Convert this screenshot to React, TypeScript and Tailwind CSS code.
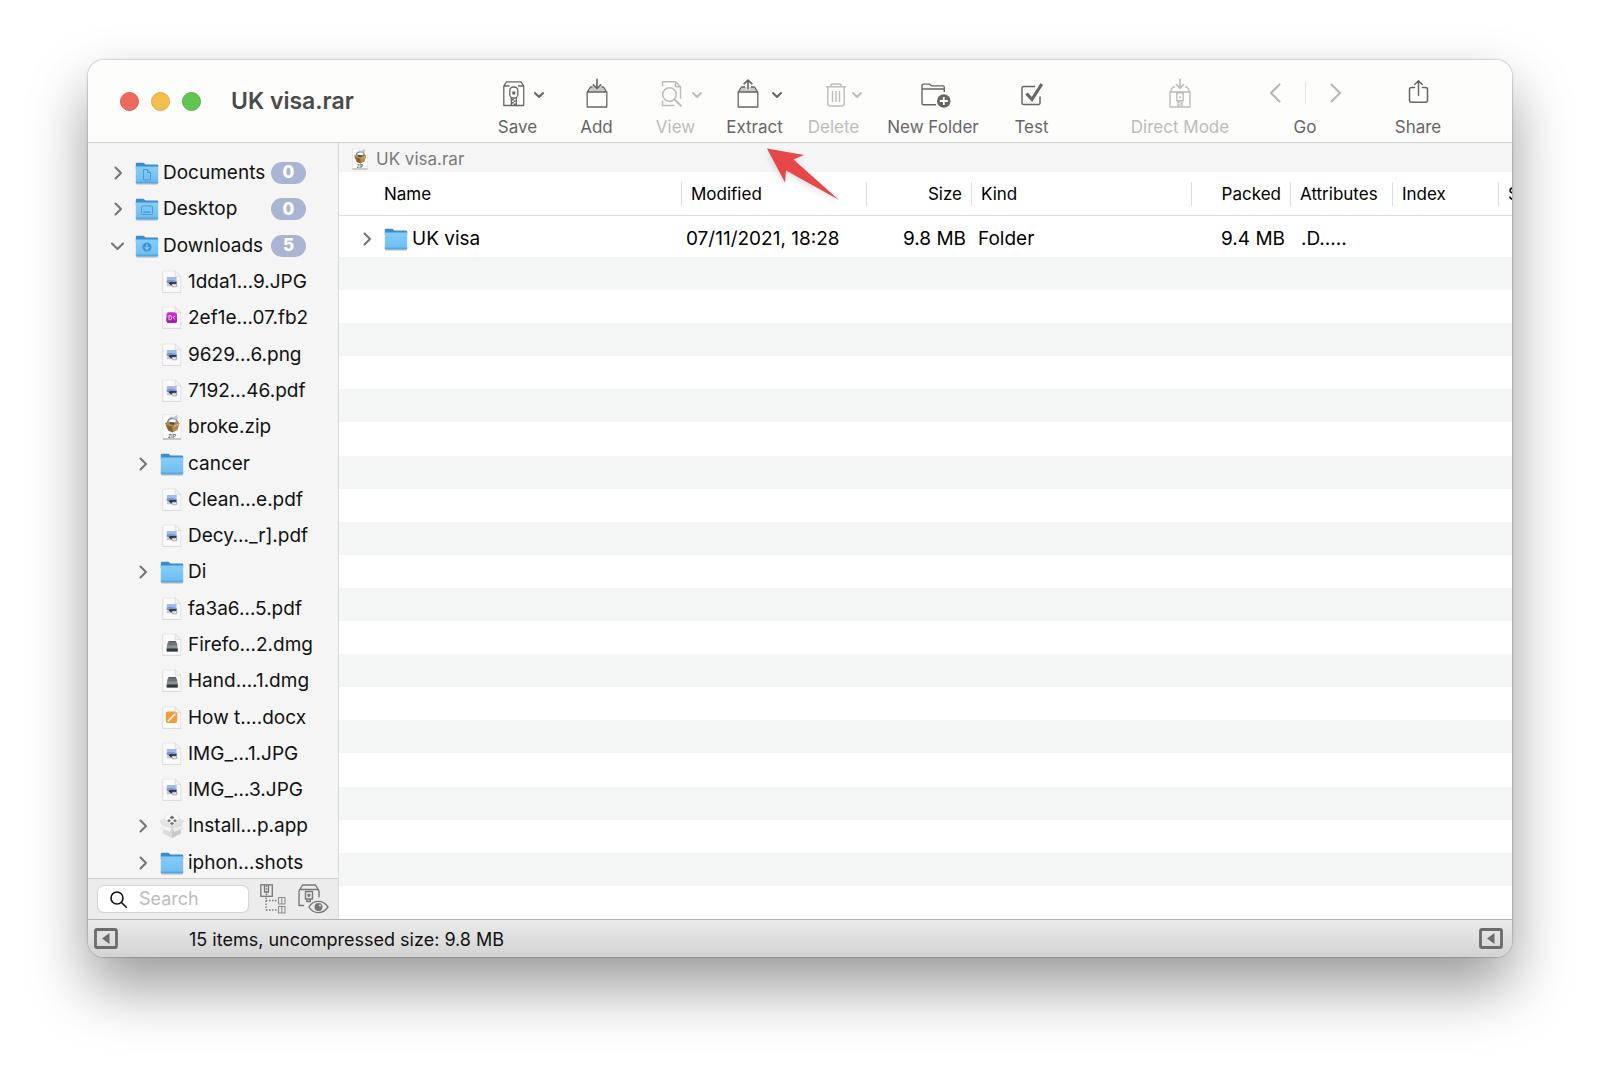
import { useState } from 'react';
import type { ReactNode } from 'react';

type FileKind = 'folder' | 'documents' | 'desktop' | 'downloads' | 'image' | 'fb2' | 'zip' | 'dmg' | 'docx' | 'app';

interface TreeItem {
  name: string;
  kind: FileKind;
  level: 0 | 1;
  open?: boolean;
  count?: number;
}

const tree: TreeItem[] = [
  { name: 'Documents', kind: 'documents', level: 0, open: false, count: 0 },
  { name: 'Desktop', kind: 'desktop', level: 0, open: false, count: 0 },
  { name: 'Downloads', kind: 'downloads', level: 0, open: true, count: 5 },
  { name: '1dda1…9.JPG', kind: 'image', level: 1 },
  { name: '2ef1e…07.fb2', kind: 'fb2', level: 1 },
  { name: '9629…6.png', kind: 'image', level: 1 },
  { name: '7192…46.pdf', kind: 'image', level: 1 },
  { name: 'broke.zip', kind: 'zip', level: 1 },
  { name: 'cancer', kind: 'folder', level: 1, open: false },
  { name: 'Clean…e.pdf', kind: 'image', level: 1 },
  { name: 'Decy…_r].pdf', kind: 'image', level: 1 },
  { name: 'Di', kind: 'folder', level: 1, open: false },
  { name: 'fa3a6…5.pdf', kind: 'image', level: 1 },
  { name: 'Firefo…2.dmg', kind: 'dmg', level: 1 },
  { name: 'Hand….1.dmg', kind: 'dmg', level: 1 },
  { name: 'How t….docx', kind: 'docx', level: 1 },
  { name: 'IMG_…1.JPG', kind: 'image', level: 1 },
  { name: 'IMG_…3.JPG', kind: 'image', level: 1 },
  { name: 'Install…p.app', kind: 'app', level: 1, open: false },
  { name: 'iphon…shots', kind: 'folder', level: 1, open: false },
];

const columns = [
  { title: 'Name', right: false },
  { title: 'Modified', right: false },
  { title: 'Size', right: true },
  { title: 'Kind', right: false },
  { title: 'Packed', right: true },
  { title: 'Attributes', right: false },
  { title: 'Index', right: false },
  { title: 'S', right: false },
];

/* ---------- File icons ---------- */

function FolderIcon({ mark }: { mark?: ReactNode }) {
  return (
    <svg width="24" height="24" viewBox="0 0 24 24" fill="none" className="shrink-0">
      <defs>
        <linearGradient id="folderFront" x1="0" y1="0" x2="0" y2="1">
          <stop offset="0" stopColor="#86cdf8" />
          <stop offset="1" stopColor="#6cbcf0" />
        </linearGradient>
      </defs>
      <path d="M.8 3a1.200 1.200 0 0 1 1.200-1.200h6.500l2 1.600H22a1.200 1.200 0 0 1 1.200 1.200V8H.8z" fill="#3c8dcb" />
      <path d="M.8 5.600h22.400V21.600a1 1 0 0 1-1 1H1.800a1 1 0 0 1-1-1z" fill="url(#folderFront)" />
      <path d="M.8 20.600h22.400v1a1 1 0 0 1-1 1H1.800a1 1 0 0 1-1-1z" fill="#58a8de" />
      <path d="M1.500 23h21" stroke="#9aa7b0" strokeWidth=".8" />
      {mark}
    </svg>
  );
}

function Page({ children }: { children?: ReactNode }) {
  return (
    <svg width="24" height="24" viewBox="0 0 24 24" fill="none" className="shrink-0">
      <path d="M2.500 2h18.400v21H2.500z" fill="#d0d0d0" />
      <path d="M2.800 1h12.400l5.600 5.600V22.300h-18z" fill="#fafafa" stroke="#dedede" strokeWidth=".6" />
      <path d="M15.200.700h6v6z" fill="#f5f5f5" />
      {children}
      <path d="M15.200 1l5.600 5.600h-5.600z" fill="#f3f3f3" stroke="#cacaca" strokeWidth=".5" />
    </svg>
  );
}

function ZipIcon({ small = false }: { small?: boolean }) {
  return (
    <svg width={small ? 20 : 24} height={small ? 22 : 26} viewBox="0 0 24 26" fill="none" className="shrink-0">
      <path d="M3 .8h14l4 4v20H3z" fill="#fff" stroke="#d6d6d6" strokeWidth=".6" />
      <path d="M3 25h18" stroke="#8a8a8a" strokeWidth=".8" />
      <path d="M7.500 9c.5-6 9.500-6 10 0" stroke="#6f93b5" strokeWidth="1.600" />
      <path d="M8 4.500l3-2 3 .5 3-2 1 3.500-3 1-3-1.500z" fill="#b9c4cc" />
      <path d="M4.800 9l4-1.500 4 2 4.500-3 2.200 3-2 6.500-5 2.500-4.500-2z" fill="#b08a52" />
      <path d="M6 11l6 1.500 1 6-4.500-2z" fill="#85612f" />
      <path d="M9.500 8l5.500.5-1.500 2.500-3.500-1z" fill="#4e4a45" />
      <path d="M14 12.500l4.500-2.500" stroke="#d9bd8a" strokeWidth="1.200" />
      <text x="12" y="23.800" textAnchor="middle" fontSize="5" fontWeight="600" fill="#555" fontFamily="Inter, sans-serif">
        ZIP
      </text>
    </svg>
  );
}

function FileIcon({ kind }: { kind: FileKind }) {
  switch (kind) {
    case 'documents':
      return <FolderIcon mark={<path d="M8.500 8.500h4l3 3v7.500h-7zM12.500 8.500v3h3" stroke="#4b9bd6" strokeWidth="1" />} />;
    case 'desktop':
      return (
        <FolderIcon
          mark={
            <>
              <rect x="6.500" y="9" width="11" height="8.500" rx="1" stroke="#4b9bd6" />
              <path d="M8.500 15.200h7" stroke="#4b9bd6" strokeWidth="1.500" />
            </>
          }
        />
      );
    case 'downloads':
      return (
        <FolderIcon
          mark={
            <>
              <circle cx="12" cy="13" r="4.600" fill="#3f93d2" />
              <path d="M12 10.200v5M9.800 13.200l2.200 2.200 2.200-2.200" stroke="#86cdf8" strokeWidth="1.200" />
            </>
          }
        />
      );
    case 'folder':
      return <FolderIcon />;
    case 'image':
      return (
        <Page>
          <rect x="6.800" y="7" width="9.800" height="6" fill="#a0bcf2" />
          <path d="M6.800 10.500l4-.8 5.800 1.300v2.200H6.800z" fill="#7f97c4" />
          <path d="M8.500 12.800l2-.8h6v3.500H9.500z" fill="#2f3647" />
          <path d="M6.800 14h3l1 2.300h-4z" fill="#c3c7cf" />
          <rect x="12" y="14" width="4.800" height="2.800" rx=".6" fill="#e4e6ea" stroke="#7d828c" strokeWidth=".6" />
        </Page>
      );
    case 'fb2':
      return (
        <Page>
          <rect x="6.500" y="6.200" width="10.500" height="10.800" rx="2.200" fill="#c92fd0" />
          <path d="M6.500 12H17v2.800a2.200 2.200 0 0 1-2.200 2.200H8.700a2.200 2.200 0 0 1-2.200-2.200z" fill="#a91eb0" />
          <path d="M9 9.500h.8a2 2.200 0 0 1 0 4.400H9zM15.200 9.800l-2.200 1.900 2.200 1.900" stroke="#f6d4f7" strokeWidth=".9" />
        </Page>
      );
    case 'dmg':
      return (
        <Page>
          <path d="M8 8.800h8.500l1.200 5.700V18a.5.500 0 0 1-.5.500H7.200a.5.500 0 0 1-.5-.5v-3.500z" fill="#8a9394" />
          <path d="M7.800 10h9l.5 2.500H7.200z" fill="#6c7577" />
          <path d="M6.700 15.500h11V18a.5.500 0 0 1-.5.500H7.200a.5.500 0 0 1-.5-.5z" fill="#303537" />
          <path d="M8.500 8.800h7.500" stroke="#222" strokeWidth="1" />
        </Page>
      );
    case 'docx':
      return (
        <Page>
          <rect x="5.800" y="5.500" width="11.500" height="11.500" rx="2.200" fill="#f49b3a" />
          <path d="M8.300 14.800l6.500-6.500" stroke="#fff" strokeWidth="1.600" strokeLinecap="round" />
        </Page>
      );
    case 'zip':
      return <ZipIcon />;
    case 'app':
      return (
        <svg width="24" height="24" viewBox="0 0 24 24" fill="none" className="shrink-0">
          <path d="M5 3a3 3 0 0 1 3-3h8a3 3 0 0 1 3 3v10H5z" fill="#fafafa" stroke="#dedede" strokeWidth=".6" />
          <path d="M12 1.500L9.500 3.500 12 5.500l2.500-2zM9 5L7 6.800 9 8.600l2-1.800zM15 5l-2 1.800 2 1.800 2-1.800zM12 7.800L9.800 9.600 12 11.400l2.200-1.800z" fill="#777" />
          <path d="M3 11l9 3.500 9-3.500v8.500L12 24l-9-4.500z" fill="#dcdcdc" />
          <path d="M12 14.500l9-3.500v8.500L12 24z" fill="#c9c9c9" />
          <path d="M3 11L.3 7l4.200-1.500L12 13v1.500z" fill="#e6e6e6" stroke="#c6c6c6" strokeWidth=".4" />
          <path d="M21 11l2.700-4-4.200-1.500L12 13v1.500z" fill="#e2e2e2" stroke="#c2c2c2" strokeWidth=".4" />
          <path d="M3 11l9 3.500L9.500 18 .5 14.500z" fill="#f2f2f2" stroke="#d4d4d4" strokeWidth=".4" />
          <path d="M21 11l-9 3.500 2.500 3.500 9-3.500z" fill="#ececec" stroke="#cdcdcd" strokeWidth=".4" />
        </svg>
      );
  }
}

/* ---------- Toolbar icons ---------- */

function Chevron({ open = false }: { open?: boolean }) {
  return (
    <svg width="14" height="14" viewBox="0 0 14 14" fill="none" stroke="#747474" strokeWidth="2" strokeLinecap="round" strokeLinejoin="round">
      {open ? <path d="M1 4.500l5.500 5.500L12 4.500" /> : <path d="M4.500 1.500L10 7l-5.500 5.500" />}
    </svg>
  );
}

function MenuArrow() {
  return (
    <svg width="12" height="30" viewBox="0 0 12 30" fill="none" stroke="currentColor" strokeWidth="2" strokeLinecap="round" strokeLinejoin="round">
      <path d="M2 15l4 4 4-4" />
    </svg>
  );
}

function ToolGlyph({ children, wide = false }: { children: ReactNode; wide?: boolean }) {
  return (
    <svg
      width={wide ? 30 : 22}
      height="30"
      viewBox={wide ? '0 0 30 30' : '0 0 22 30'}
      fill="none"
      stroke="currentColor"
      strokeWidth="1.300"
      strokeLinejoin="round"
    >
      {children}
    </svg>
  );
}

const saveGlyph = (
  <ToolGlyph>
    <path d="M.8 8L3.500 3.800h14.500L20.700 8v19.500H.8zM.8 8h5.700M15 8h5.700" />
    <rect x="6.800" y="9" width="8" height="11" rx="3.500" />
    <rect x="9.300" y="13.500" width="3" height="3" fill="currentColor" stroke="none" />
    <path d="M8.300 20v7.500M13.300 20v7.500" />
    <path d="M8.800 20.800h2v1.600h-2zM10.800 22.400h2V24h-2zM8.800 24h2v1.600h-2zM10.800 25.600h2v1.600h-2z" fill="currentColor" stroke="none" />
  </ToolGlyph>
);

const addGlyph = (
  <ToolGlyph>
    <path d="M1.200 14L4.500 9 8 8.500l3 3 3-3 3.500.5 3.300 5z" fill="currentColor" fillOpacity=".35" stroke="none" />
    <path d="M1.200 14h19.600v15H1.200zM1.200 14L4.500 9h2M20.800 14l-3.300-5h-2" />
    <path d="M11 .8V10M6.800 6.400L11 10.500l4.200-4.100" strokeWidth="1.600" />
  </ToolGlyph>
);

const extractGlyph = (
  <ToolGlyph>
    <path d="M1.200 14L4.500 9h5v3h3V9h5l3.300 5z" fill="currentColor" fillOpacity=".35" stroke="none" />
    <path d="M1.200 14h19.600v15H1.200zM1.200 14L4.500 9H8M20.800 14l-3.300-5H14" />
    <path d="M11 11.500V2.500M6.600 6.400L11 2.100l4.400 4.300" strokeWidth="1.600" />
  </ToolGlyph>
);

const viewGlyph = (
  <ToolGlyph>
    <path d="M1.500 8.500V3.800h13l5 5v12M1.500 22.500v5h12M14.500 3.800v5h5" strokeWidth="1.500" />
    <circle cx="8.500" cy="16.500" r="6.800" strokeWidth="1.600" />
    <path d="M13.500 21.500l7 6.800" strokeWidth="2" />
  </ToolGlyph>
);

const deleteGlyph = (
  <ToolGlyph>
    <path d="M1 8.700h20M6 8.500V7a1 1 0 0 1 1-1h8a1 1 0 0 1 1 1v1.500" strokeWidth="1.400" />
    <path d="M2.800 9v16.500a2.500 2.500 0 0 0 2.500 2.500h11.400a2.500 2.500 0 0 0 2.500-2.500V9M7.500 13v11M11 13v11M14.500 13v11" strokeWidth="1.400" />
  </ToolGlyph>
);

const newFolderGlyph = (
  <ToolGlyph wide>
    <path d="M15 26.800H2.500A1.500 1.500 0 0 1 1 25.300V7.300a1.200 1.200 0 0 1 1.200-1.200h6.300l2 1.800h11.300a1.500 1.500 0 0 1 1.500 1.400v4.700M1 11h22.300" strokeWidth="1.400" />
    <circle cx="22.800" cy="23" r="6.800" fill="currentColor" stroke="none" />
    <path d="M22.800 19v8M18.800 23h8" stroke="#fff" strokeWidth="1.800" />
  </ToolGlyph>
);

const testGlyph = (
  <ToolGlyph>
    <path d="M14 8.500H2.500A1.500 1.500 0 0 0 1 10v15a1.500 1.500 0 0 0 1.500 1.500h15A1.500 1.500 0 0 0 19 25v-6.500" strokeWidth="1.500" />
    <path d="M5.500 15.500l5.500 6L20.800 6" strokeWidth="3.200" strokeLinejoin="miter" />
  </ToolGlyph>
);

const directGlyph = (
  <ToolGlyph>
    <path d="M1 14h20v15H1zM1 14l3-5h2M21 14l-3-5h-2" strokeWidth="1.400" />
    <path d="M11 .8v9M6.800 6L11 10.200 15.200 6" strokeWidth="1.600" />
    <path d="M7.800 14.800h6.400v8H7.800zM9 22.800v6M13 22.800v6" strokeWidth="1.400" />
    <path d="M10.200 18.300h1.800v1.800h-1.800zM9.500 23.300h1.700v1.600H9.500zM11.200 24.900h1.600v1.600h-1.600zM9.500 26.500h1.700v1.600H9.500z" fill="currentColor" stroke="none" />
  </ToolGlyph>
);

const shareGlyph = (
  <ToolGlyph>
    <path d="M7.500 9.500H4.500a2 2 0 0 0-2 2v10.800a2 2 0 0 0 2 2h14a2 2 0 0 0 2-2V11.500a2 2 0 0 0-2-2h-3M11.500 17.500V3M7.700 6.500l3.800-3.800 3.800 3.800" strokeWidth="1.500" strokeLinecap="round" />
  </ToolGlyph>
);

interface ToolButtonProps {
  label: string;
  icon: ReactNode;
  width?: string;
  iconRow?: string;
  menu?: boolean;
  disabled?: boolean;
}

function ToolButton({ label, icon, width = 'w-[79px]', iconRow = '', menu = false, disabled = false }: ToolButtonProps) {
  return (
    <button
      type="button"
      disabled={disabled}
      className={`flex shrink-0 flex-col items-center gap-[7px] whitespace-nowrap ${width} ${disabled ? 'text-[#bcbcbb]' : 'text-[#666]'}`}
    >
      <span className={`flex ${iconRow}`}>
        {icon}
        {menu && <MenuArrow />}
      </span>
      <span className="text-[17px] leading-6">{label}</span>
    </button>
  );
}

function Toolbar() {
  return (
    <header className="flex h-[83px] shrink-0 border-b border-[#cfcfcf] bg-[#fdfdfb] pr-[46px]">
      <div className="flex w-[390px] shrink-0 items-center gap-[30px] pl-8">
        <div className="flex gap-3">
          <button type="button" aria-label="Close" className="size-[19px] rounded-full border border-[#dd574f] bg-[#ec6a5e]" />
          <button type="button" aria-label="Minimize" className="size-[19px] rounded-full border border-[#e1ab45] bg-[#f5bf4f]" />
          <button type="button" aria-label="Zoom" className="size-[19px] rounded-full border border-[#56b045] bg-[#61c554]" />
        </div>
        <h1 className="text-[23px] leading-8 font-semibold text-[#4a4a4a]">UK visa.rar</h1>
      </div>

      <div className="flex flex-1 pt-[18px]">
        <ToolButton label="Save" icon={saveGlyph} iconRow="gap-2 pl-3" menu />
        <ToolButton label="Add" icon={addGlyph} />
        <ToolButton label="View" icon={viewGlyph} iconRow="gap-2 pl-3" menu disabled />
        <div className="relative">
          <ToolButton label="Extract" icon={extractGlyph} iconRow="gap-3 pl-2.5" menu />
          <svg
            width="76"
            height="56"
            viewBox="0 0 76 56"
            className="pointer-events-none absolute top-[69px] left-[50px] z-10 drop-shadow-md"
          >
            <path d="M2 1.500l37 6.500-10.500 4.500L74 53 21 23.500l-1 12z" fill="#e8474a" />
          </svg>
        </div>
        <ToolButton label="Delete" icon={deleteGlyph} iconRow="gap-1 pl-5" menu disabled />
        <ToolButton label="New Folder" icon={newFolderGlyph} width="w-[120px]" iconRow="pl-1.5" />
        <ToolButton label="Test" icon={testGlyph} width="w-[77px]" />

        <div className="ml-auto flex">
          <ToolButton label="Direct Mode" icon={directGlyph} width="w-[120px]" disabled />
          <div role="group" aria-labelledby="go-label" className="flex w-[130px] flex-col items-center gap-[7px] text-[#666]">
            <div className="flex h-[30px] items-center gap-6 text-[#b5b5b5]">
              <button type="button" aria-label="Back">
                <svg width="12" height="20" viewBox="0 0 12 20" fill="none" stroke="currentColor" strokeWidth="2" strokeLinecap="round" strokeLinejoin="round">
                  <path d="M10.500 1.500L2 10l8.500 8.500" />
                </svg>
              </button>
              <span className="h-[22px] w-px bg-[#e4e4e2]" />
              <button type="button" aria-label="Forward">
                <svg width="12" height="20" viewBox="0 0 12 20" fill="none" stroke="currentColor" strokeWidth="2" strokeLinecap="round" strokeLinejoin="round">
                  <path d="M1.500 1.500L10 10l-8.500 8.500" />
                </svg>
              </button>
            </div>
            <span id="go-label" className="text-[17px] leading-6">Go</span>
          </div>
          <ToolButton label="Share" icon={shareGlyph} width="w-24" />
        </div>
      </div>
    </header>
  );
}

/* ---------- Sidebar ---------- */

function Sidebar() {
  const [query, setQuery] = useState('');

  return (
    <aside className="flex w-[251px] shrink-0 flex-col border-r border-[#d9d9d9] bg-[#f5f5f5]">
      <div className="flex flex-1 flex-col overflow-hidden pt-3">
        <ul className="-mb-[3px] flex flex-1 flex-col">
          {tree.map((item) => (
            <li key={item.name} className={`flex flex-1 items-center ${item.level === 0 ? 'pl-[23px]' : 'pl-12'}`}>
              <span className="mr-2.5 flex w-3.5 shrink-0">
                {item.open !== undefined && (
                  <button type="button" aria-label={`Toggle ${item.name}`}>
                    <Chevron open={item.open} />
                  </button>
                )}
              </span>
              <FileIcon kind={item.kind} />
              <span className="ml-1 text-[19px] leading-6 whitespace-nowrap text-[#111]">{item.name}</span>
              {item.count !== undefined && (
                <span className="mr-8 ml-auto flex h-[22px] w-[35px] items-center justify-center rounded-full bg-[#a9b5d3] text-[17px] font-extrabold text-white">
                  {item.count}
                </span>
              )}
            </li>
          ))}
        </ul>
      </div>

      <div className="relative z-10 flex h-[41px] shrink-0 items-center border-t border-[#cdcdcd] bg-[#ececec] pl-2.5">
        <label className="flex h-[26px] w-[150px] items-center gap-3 rounded-md bg-white pl-3 shadow-[0_0_1px_1px_rgba(0,0,0,0.1)]">
          <svg width="17" height="17" viewBox="0 0 17 17" fill="none" stroke="#111" strokeWidth="1.600" strokeLinecap="round">
            <circle cx="7" cy="7" r="6" />
            <path d="M11.500 11.500l4.800 4.800" />
          </svg>
          <input
            type="text"
            aria-label="Search"
            placeholder="Search"
            value={query}
            onChange={(e) => setQuery(e.target.value)}
            className="w-24 bg-transparent text-[18px] leading-6 text-[#111] outline-none placeholder:text-[#bdbdbd]"
          />
        </label>
        <button type="button" aria-label="Archive tree" className="ml-3">
          <svg width="26" height="30" viewBox="0 0 26 30" fill="none" stroke="#777" strokeWidth="1.300">
            <rect x=".8" y=".8" width="11.500" height="11.500" />
            <path d="M4.500 1v7h4V1" />
            <path d="M6.500 1.500v10.500" strokeWidth="1.600" strokeDasharray="1.500 1.200" />
            <path d="M6 13.500V26M6 16.500h12M6 26h12" strokeDasharray="1.500 1.500" />
            <path d="M18.500 13.500h6.500v6.500h-6.500zM18.500 22.500h6.500V29h-6.500zM21.800 13.500v6.500M21.800 22.500V29" stroke="#8c8c8c" strokeWidth="1.100" />
          </svg>
        </button>
        <button type="button" aria-label="Preview archive" className="ml-3">
          <svg width="31" height="30" viewBox="0 0 31 30" fill="none" stroke="#777" strokeWidth="1.400" strokeLinejoin="round">
            <path d="M6 21.500H1V7L4.500 1h13L21 7v6.500M1 5.500h20" />
            <path d="M7.500 7.500h7v7.500h-7zM8.800 15v2.500h3.500V15M10.200 10.500h1.500V12h-1.500z" />
            <path d="M11 23c4.500-7.500 14-7.500 19 0-5 7.500-14.500 7.500-19 0z" fill="#ececec" />
            <circle cx="20.500" cy="23" r="4" fill="#777" stroke="none" />
            <circle cx="22" cy="21.500" r="1.100" fill="#d8d8d8" stroke="none" />
          </svg>
        </button>
      </div>
    </aside>
  );
}

/* ---------- Archive contents ---------- */

function ArchiveTable() {
  return (
    <table className="w-full shrink-0 table-fixed border-collapse text-left text-black">
      <colgroup>
        <col />
        <col className="w-[185px]" />
        <col className="w-[105px]" />
        <col className="w-[220px]" />
        <col className="w-[99px]" />
        <col className="w-[102px]" />
        <col className="w-[106px]" />
        <col className="w-[13px]" />
      </colgroup>
      <thead>
        <tr className="h-[43px] border-b border-[#dedede]">
          {columns.map((col, i) => (
            <th key={col.title} scope="col" className="overflow-hidden p-0 pt-0.5 text-[17px] leading-6 font-normal whitespace-nowrap">
              <div className={`${i === 0 ? 'pl-[45px]' : 'px-[9px]'} ${i < columns.length - 1 ? 'border-r border-[#dedede]' : ''} ${col.right ? 'text-right' : ''}`}>
                {col.title}
              </div>
            </th>
          ))}
        </tr>
      </thead>
      <tbody>
        <tr className="h-[42px] text-[19px] leading-6 whitespace-nowrap">
          <td className="p-0">
            <div className="flex items-center pt-1.5 pl-[21px]">
              <button type="button" aria-label="Toggle UK visa" className="mr-2.5">
                <Chevron />
              </button>
              <FolderIcon />
              <span className="ml-1">UK visa</span>
            </div>
          </td>
          <td className="pt-1.5 pr-0 pb-0 pl-1">07/11/2021, 18:28</td>
          <td className="pt-1.5 pr-1.5 pb-0 pl-0 text-right">9.8 MB</td>
          <td className="pt-1.5 pr-0 pb-0 pl-1.5">Folder</td>
          <td className="pt-1.5 pr-1.5 pb-0 pl-0 text-right">9.4 MB</td>
          <td className="pt-1.5 pr-0 pb-0 pl-2.5">.D.....</td>
          <td />
          <td />
        </tr>
      </tbody>
    </table>
  );
}

function PanelToggle({ label }: { label: string }) {
  return (
    <button type="button" aria-label={label}>
      <svg width="24" height="21" viewBox="0 0 24 21" fill="none">
        <rect x="1.500" y="1.500" width="21" height="18" rx="1.500" stroke="#6b6b6b" strokeWidth="2.800" />
        <path d="M15.500 5v11L8 10.500z" fill="#6b6b6b" />
      </svg>
    </button>
  );
}

export default function App() {
  return (
    <div className="flex min-h-screen flex-col bg-white px-[88px] pt-[60px] pb-[116px] font-['Inter',sans-serif]">
      <main className="flex flex-1 flex-col overflow-hidden rounded-2xl bg-white shadow-[0_0_1px_1px_rgba(0,0,0,0.15),0_30px_60px_rgba(0,0,0,0.4)]">
        <Toolbar />

        <div className="flex flex-1">
          <Sidebar />
          <section className="flex min-w-0 flex-1 flex-col">
            <div className="flex h-[29px] shrink-0 items-center gap-1.5 bg-[#f5f5f5] pt-0.5 pl-[11px] text-[17px] leading-6 text-[#7a7a7a]">
              <ZipIcon small />
              <span>UK visa.rar</span>
            </div>
            <ArchiveTable />
            <div className="flex flex-1 flex-col">
              {Array.from({ length: 20 }, (_, i) => (
                <div key={i} className="flex-1 odd:bg-[#f4f5f5]" />
              ))}
            </div>
          </section>
        </div>

        <footer className="flex h-[38px] shrink-0 items-center border-t border-[#b4b4b4] bg-linear-to-b from-[#ebebeb] to-[#d3d3d3] pr-[9px] pl-1.5">
          <PanelToggle label="Toggle sidebar" />
          <p className="ml-[71px] flex-1 pt-0.5 text-[18px] leading-6 text-[#111]">15 items, uncompressed size: 9.8 MB</p>
          <PanelToggle label="Toggle info panel" />
        </footer>
      </main>
    </div>
  );
}
